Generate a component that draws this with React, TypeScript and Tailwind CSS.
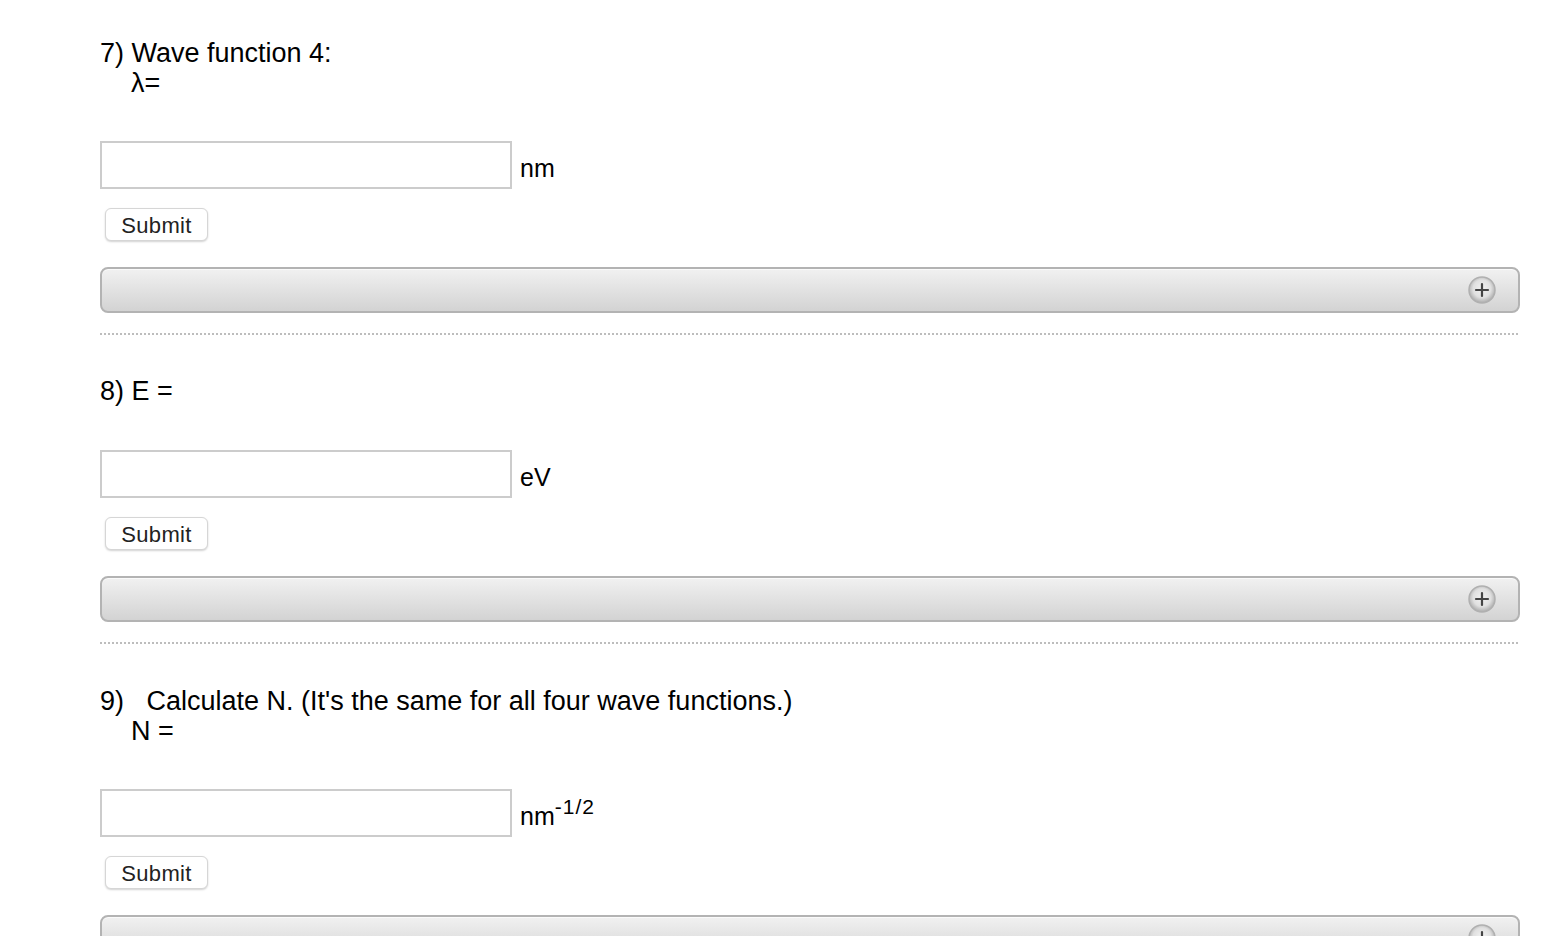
import type { ReactNode } from "react";

function PlusIcon() {
  return (
    <svg width="28" height="28" viewBox="0 0 28 28" aria-hidden>
      <defs>
        <radialGradient id="pg" cx="50%" cy="45%" r="55%">
          <stop offset="0%" stopColor="#f2f2f2" />
          <stop offset="62%" stopColor="#e0e0e0" />
          <stop offset="100%" stopColor="#a9a9a9" />
        </radialGradient>
      </defs>
      <circle cx="14" cy="14" r="13" fill="url(#pg)" stroke="#b0b0b0" strokeWidth="1.5" />
      <path d="M14 8v12M8 14h12" stroke="#454545" strokeWidth="2.2" strokeLinecap="round" />
    </svg>
  );
}

function AnswerBlock({ unit, last }: { unit: ReactNode; last?: boolean }) {
  return (
    <div>
      <div className="flex items-center">
        <input
          type="text"
          className="h-[48px] w-[412px] border-2 border-[#cccccc] bg-white outline-none"
        />
        <span className="ml-2 mt-[6px] text-[25px] leading-[30px] text-black">{unit}</span>
      </div>
      <button
        type="button"
        className="ml-[5px] mt-[19px] flex h-[33px] w-[103px] items-center justify-center rounded-[6px] border border-[#d6d6d6] bg-white pt-[2px] text-[22px] tracking-[0.3px] text-[#222] shadow-[0_1px_2px_rgba(0,0,0,0.18)]"
        style={{ fontFamily: '"Liberation Sans", Arial, sans-serif' }}
      >
        Submit
      </button>
      <div className="mt-[26px] flex h-[46px] items-center justify-end rounded-[8px] border-2 border-[#b3b3b3] bg-gradient-to-b from-[#f1f1f1] to-[#d3d3d3] pr-[22px] shadow-[inset_0_1px_0_#fafafa]">
        <PlusIcon />
      </div>
      {last ? null : (
        <div className="mt-[20px] h-[2px] bg-[repeating-linear-gradient(to_right,#bdbdbd_0_2px,transparent_2px_4px)]" />
      )}
    </div>
  );
}

export default function App() {
  return (
    <div
      className="min-h-[936px] overflow-hidden bg-white pl-[100px] pr-[32px] pt-[38px] text-black"
      style={{ fontFamily: '"Liberation Sans", Arial, sans-serif' }}
    >
      <section>
        <div className="text-[27px] leading-[30px]">
          <div>7) Wave function 4:</div>
          <div className="pl-[31px]">λ=</div>
        </div>
        <div className="mt-[43px]">
          <AnswerBlock unit="nm" />
        </div>
      </section>

      <section className="mt-[41px]">
        <div className="text-[27px] leading-[30px]">
          <div>8) E =</div>
        </div>
        <div className="mt-[44px]">
          <AnswerBlock unit="eV" />
        </div>
      </section>

      <section className="mt-[42px]">
        <div className="text-[27px] leading-[30px]">
          <div>
            9)&nbsp;&nbsp; Calculate N. (It's the same for all four wave functions.)
          </div>
          <div className="pl-[31px]">N =</div>
        </div>
        <div className="mt-[43px]">
          <AnswerBlock
            last
            unit={
              <>
                nm<sup className="-top-[11px] text-[21px] tracking-[1px]">-1/2</sup>
              </>
            }
          />
        </div>
      </section>
    </div>
  );
}
